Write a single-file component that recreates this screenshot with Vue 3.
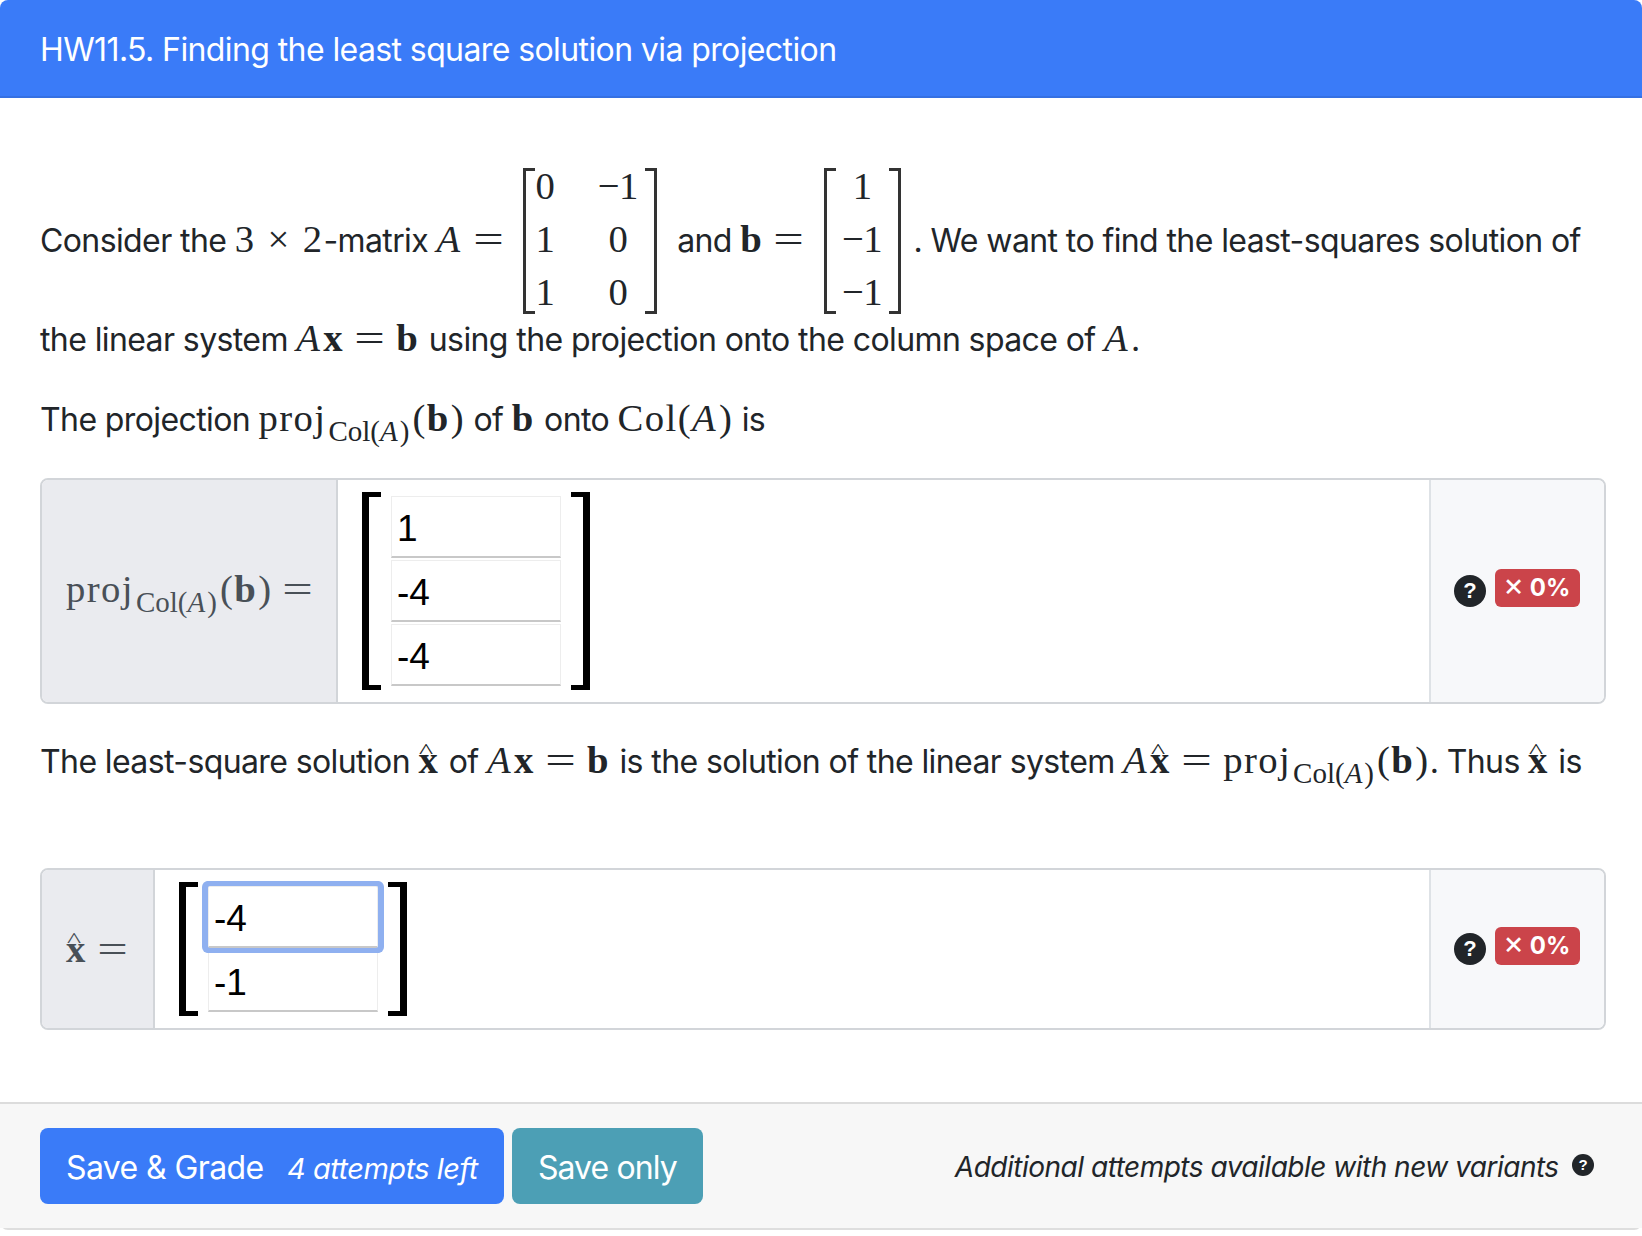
<template>
  <div class="card">
    <div class="card-header">HW11.5. Finding the least square solution via projection</div>

    <div class="card-body">
      <p class="intro">
        Consider the <span class="m">3<span class="op">×</span>2</span>-matrix <span class="m"><i>A</i><span class="eq">=</span></span>
        <span class="matrix mat-a">
          <template v-for="(row, r) in matrixA" :key="r">
            <span v-for="(cell, c) in row" :key="c">{{ cell }}</span>
          </template>
        </span>
        and <span class="m"><b>b</b><span class="eq">=</span></span>
        <span class="matrix mat-b">
          <span v-for="cell in vectorB" :key="cell.id">{{ cell.text }}</span>
        </span>. We want to find the least-squares solution of<br />
        the linear system <span class="m"><i>A</i><b>x</b><span class="eq">=</span><b>b</b></span> using the projection onto the column space of
        <span class="m"><i>A</i></span>.
      </p>

      <p class="third">
        The projection <span class="m">proj<sub>Col(<i>A</i>)</sub>(<b>b</b>)</span> of <span class="m"><b>b</b></span>
        onto <span class="m">Col(<i>A</i>)</span> is
      </p>

      <div class="group">
        <div class="addon addon-proj"><span class="m">proj<sub>Col(<i>A</i>)</sub>(<b>b</b>)<span class="eq">=</span></span></div>
        <div class="answer">
          <div class="bracketed">
            <span class="br br-l"></span>
            <div class="inputs">
              <input v-for="v in projValues" :key="v.id" class="cell" :value="v.text" />
            </div>
            <span class="br br-r"></span>
          </div>
        </div>
        <div class="status">
          <span class="help">?</span>
          <span class="badge"><span class="times">×</span> 0%</span>
        </div>
      </div>

      <p class="fourth">
        The least-square solution <span class="m"><b class="hat">x</b></span> of <span class="m"><i>A</i><b>x</b><span class="eq">=</span><b>b</b></span>
        is the solution of the linear system
        <span class="m"><i>A</i><b class="hat">x</b><span class="eq">=</span>proj<sub>Col(<i>A</i>)</sub>(<b>b</b>)</span>. Thus
        <span class="m"><b class="hat">x</b></span> is
      </p>

      <div class="group last">
        <div class="addon addon-x"><span class="m"><b class="hat">x</b><span class="eq">=</span></span></div>
        <div class="answer">
          <div class="bracketed small">
            <span class="br br-l"></span>
            <div class="inputs">
              <input class="cell focused" value="-4" />
              <input class="cell" value="-1" />
            </div>
            <span class="br br-r"></span>
          </div>
        </div>
        <div class="status">
          <span class="help">?</span>
          <span class="badge"><span class="times">×</span> 0%</span>
        </div>
      </div>
    </div>

    <div class="card-footer">
      <button class="btn btn-grade">Save &amp; Grade <small>4 attempts left</small></button>
      <button class="btn btn-save">Save only</button>
      <span class="note">Additional attempts available with new variants <span class="help help-sm">?</span></span>
    </div>
  </div>
</template>

<script setup>
const matrixA = [
  ['0', '−1'],
  ['1', '0'],
  ['1', '0']
]
const vectorB = [
  { id: 1, text: '1' },
  { id: 2, text: '−1' },
  { id: 3, text: '−1' }
]
const projValues = [
  { id: 1, text: '1' },
  { id: 2, text: '-4' },
  { id: 3, text: '-4' }
]
</script>

<style>
body {
  margin: 0;
  background: #fff;
}
</style>

<style scoped>
.card {
  font-family: Inter, "Liberation Sans", sans-serif;
  font-size: 32px;
  line-height: 48px;
  letter-spacing: -0.6px;
  color: #212529;
  white-space: nowrap;
  border-bottom: 2px solid #dedede;
  border-radius: 0 0 8px 8px;
}
.card-header {
  height: 48px;
  padding: 26px 40px 22px;
  background: #3a7bf8;
  color: #fff;
  border-radius: 8px 8px 0 0;
  border-bottom: 2px solid #3570e2;
}
.card-body {
  padding: 40px 36px 40px 40px;
}
p {
  margin: 0 0 32px;
}
.intro {
  padding-top: 34px;
  margin-bottom: 30px;
  line-height: 48px;
}
.third {
  margin-bottom: 34px;
}
.fourth {
  margin: 32px 0 82px;
}
.m {
  font-family: "Liberation Serif", serif;
  font-size: 38.7px;
  letter-spacing: 1.4px;
}
.m i {
  font-style: italic;
  margin-right: 2px;
}
.m b {
  font-weight: 700;
  letter-spacing: 2.5px;
}
.eq {
  display: inline-block;
  margin: 0 14px;
  transform: scaleX(1.4);
}
.op {
  display: inline-block;
  margin: 0 12px;
}
.hat {
  position: relative;
  display: inline-block;
}
.hat::before {
  content: "^";
  position: absolute;
  left: 0;
  right: 2px;
  top: -9px;
  text-align: center;
  font-size: 20px;
  font-weight: 400;
  transform: scaleX(1.5);
}
sub {
  font-size: 29px;
  letter-spacing: 0;
  line-height: 0;
  vertical-align: -10px;
  margin-left: 2px;
  margin-right: 3px;
}

.matrix {
  display: inline-grid;
  vertical-align: middle;
  position: relative;
  grid-auto-rows: 53px;
  font-family: "Liberation Serif", serif;
  font-size: 38.7px;
  line-height: 53px;
  text-align: center;
  box-sizing: border-box;
  height: 146px;
  padding-bottom: 4px;
  align-content: center;
  margin: -4px 12px 0 8px;
}
.matrix::before,
.matrix::after {
  content: "";
  position: absolute;
  top: 0;
  bottom: 0;
  width: 9px;
  border: 3px solid #333;
  border-right: 0;
  left: 0;
}
.matrix::after {
  left: auto;
  right: 0;
  border: 3px solid #333;
  border-left: 0;
}
.mat-a {
  width: 134px;
  grid-template-columns: 44px 44px;
  justify-content: start;
  column-gap: 29px;
}
.mat-b {
  width: 77px;
  margin-right: 13px;
  grid-template-columns: 1fr;
}

.group {
  display: flex;
  height: 226px;
  box-sizing: border-box;
  margin-bottom: 32px;
  border: 2px solid #d2d5d9;
  border-radius: 8px;
}
.group.last {
  height: 162px;
  margin-bottom: 32px;
}
.addon {
  display: flex;
  align-items: center;
  box-sizing: border-box;
  padding-left: 24px;
  background: #eaebef;
  color: #495057;
  border-right: 2px solid #d2d5d9;
  border-radius: 6px 0 0 6px;
}
.addon-proj {
  width: 296px;
  padding-bottom: 4px;
}
.addon-x {
  width: 113px;
}
.answer {
  flex: 1;
  display: flex;
  align-items: center;
  padding-left: 24px;
}
.bracketed {
  display: flex;
  align-items: stretch;
  gap: 10px;
  height: 198px;
}
.bracketed.small {
  height: 134px;
}
.br {
  width: 12px;
  border: 5px solid #000;
  border-left-width: 7px;
  border-right: 0;
}
.br-r {
  border-right: 7px solid #000;
  border-left: 0;
}
.inputs {
  display: flex;
  flex-direction: column;
  justify-content: center;
  gap: 2px;
}
.cell {
  display: block;
  width: 170px;
  height: 62px;
  box-sizing: border-box;
  padding: 4px 5px 0;
  font-family: "Liberation Sans", sans-serif;
  font-size: 37px;
  color: #000;
  background: #fff;
  border: 1px solid #ededed;
  border-bottom: 2px solid #c8c8c8;
  outline: none;
}
.focused {
  box-shadow: 0 0 0 5px #8fb0f0, -1px 0 0 5px #8fb0f0, 1px 0 0 5px #8fb0f0;
  border-radius: 2px;
  position: relative;
  z-index: 1;
}
.status {
  width: 175px;
  display: flex;
  align-items: center;
  gap: 9px;
  box-sizing: border-box;
  padding-left: 23px;
  background: #f7f8fa;
  border-left: 2px solid #dee2e6;
  border-radius: 0 6px 6px 0;
}
.help {
  display: inline-flex;
  align-items: center;
  justify-content: center;
  width: 32px;
  height: 32px;
  border-radius: 50%;
  background: #212529;
  color: #fff;
  font-family: "Liberation Sans", sans-serif;
  font-size: 22px;
  font-weight: 700;
  font-style: normal;
  letter-spacing: 0;
  line-height: 1;
  flex: none;
}
.help-sm {
  width: 22px;
  height: 22px;
  font-size: 15px;
  vertical-align: 7px;
  margin-left: 6px;
}
.badge {
  display: block;
  width: 85px;
  height: 38px;
  margin-top: -6px;
  box-sizing: border-box;
  padding-left: 8px;
  background: #cb444a;
  color: #fff;
  border-radius: 6px;
  font-size: 24px;
  font-weight: 700;
  letter-spacing: 0;
  line-height: 38px;
}
.times {
  font-size: 32px;
  font-weight: 400;
  line-height: 0;
}

.card-footer {
  display: flex;
  align-items: center;
  gap: 8px;
  height: 124px;
  padding: 0 40px;
  background: #f7f7f7;
  border-top: 2px solid #dcdcdc;
}
.btn {
  height: 76px;
  padding: 2px 26px 0;
  border: 0;
  border-radius: 8px;
  color: #fff;
  font-family: Inter, "Liberation Sans", sans-serif;
  font-size: 32px;
  letter-spacing: -0.6px;
}
.btn-grade {
  background: #3a7bf8;
}
.btn-grade small {
  margin-left: 15px;
  font-size: 29px;
  letter-spacing: -0.5px;
  font-style: italic;
}
.btn-save {
  background: #4c9fb5;
  letter-spacing: -0.9px;
}
.note {
  margin-left: auto;
  margin-right: 8px;
  padding-top: 2px;
  font-size: 28px;
  font-style: italic;
  letter-spacing: -0.5px;
}
</style>
